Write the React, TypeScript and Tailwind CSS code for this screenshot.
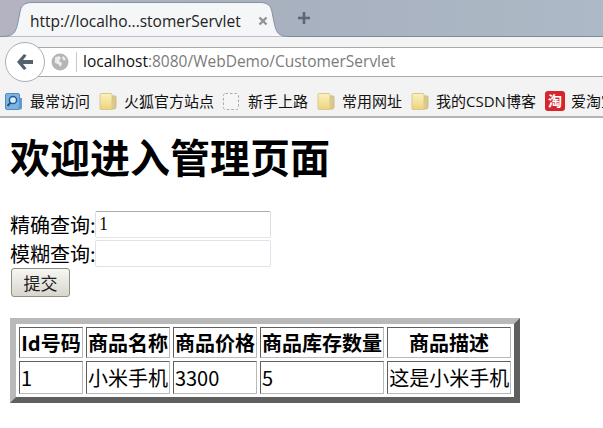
import React from 'react';

const ui = "font-['Open_Sans','Noto_Sans_CJK_SC',sans-serif]";

const Folder = () => (
  <svg width="18" height="19" viewBox="0 0 18 19" className="shrink-0">
    <defs>
      <linearGradient id="folderFill" x1="0" y1="0" x2="0" y2="1">
        <stop offset="0" stopColor="#fbf2bd" />
        <stop offset="1" stopColor="#ecd47c" />
      </linearGradient>
    </defs>
    <path d="M13 4h3q1 0 1 1v10q0 2-2 2h-3z" fill="#dcc98a" stroke="#c9bb8c" />
    <path d="M1 2.5q0-1 1-1h10q1 0 1 1v14q0 1-1 1H2q-1 0-1-1z" fill="url(#folderFill)" stroke="#d8c98f" />
  </svg>
);

const SearchBookmark = () => (
  <svg width="18" height="19" viewBox="0 0 18 19" className="shrink-0">
    <rect x="0.5" y="1.5" width="14" height="16" rx="1.5" fill="#7fb2e0" stroke="#4f8cc4" />
    <path d="M15 6h2v10q0 1.5-1.5 1.5H13z" fill="#5d9bd3" />
    <circle cx="8" cy="8" r="3.6" fill="#dcecf9" stroke="#1f5d96" strokeWidth="1.5" />
    <path d="M5.4 10.8 2.5 14" stroke="#1f4f80" strokeWidth="2" />
  </svg>
);

const DashedPage = () => (
  <svg width="18" height="19" viewBox="0 0 18 19" className="shrink-0">
    <rect x="0.5" y="1.5" width="15" height="16" rx="2" fill="#f6f6f6" stroke="#a8a8a8" strokeDasharray="2.5 2" />
  </svg>
);

const BookmarkItem = ({ icon, label }: { icon: React.ReactNode; label: string }) => (
  <div className="flex items-center gap-[7px] shrink-0">
    {icon}
    <span className="text-[15px] leading-none text-[#111]">{label}</span>
  </div>
);

const headers = ['Id号码', '商品名称', '商品价格', '商品库存数量', '商品描述'];
const row = ['1', '小米手机', '3300', '5', '这是小米手机'];
const widths = ['w-[63.5px]', 'w-[83.5px]', 'w-[83.5px]', 'w-[123.5px]', 'w-[123px]'];

export default function App() {
  return (
    <div className="w-[603px] h-[428px] overflow-hidden bg-white">
      {/* tab strip */}
      <div className={`${ui} h-[37px] flex items-end bg-gradient-to-r from-[#b3b3c2] via-[#a8b1bf] to-[#adb9c6] border-b border-[#7e8b99]`}>
        <div className="relative w-[287px] h-[35px] ml-[2px] -mb-px shrink-0">
          <svg width="287" height="35" viewBox="0 0 287 35" className="absolute inset-0">
            <path
              d="M0 34.5C12 34.5 14 30 16 20L18 10C19 4 22 .5 30 .5H258C266 .5 269 4 270 10L272 20C274 30 276 34.5 287 34.5"
              fill="#f5f6f7"
              stroke="#8593a1"
            />
          </svg>
          <span className="absolute left-[28px] top-[9px] text-[15.5px] leading-[20px] text-[#222] whitespace-nowrap">
            http://localho...stomerServlet
          </span>
          <svg width="10" height="10" viewBox="0 0 10 10" className="absolute left-[256px] top-[14px]">
            <path d="M1.5 1.5 8.5 8.5M8.5 1.5 1.5 8.5" stroke="#8d949c" strokeWidth="2.4" />
          </svg>
        </div>
        <svg width="14" height="14" viewBox="0 0 14 14" className="ml-[8px] mb-[11px]">
          <path d="M7 1v12M1 7h12" stroke="#5c6670" strokeWidth="2.6" />
        </svg>
      </div>

      {/* nav bar */}
      <div className={`${ui} relative h-[40px] bg-[#f3f3f3] pt-[10px]`}>
        <div className="h-[30px] ml-[30px] bg-white border-y border-[#a9a9a9] flex items-center">
          <svg width="18" height="18" viewBox="0 0 18 18" className="ml-[21px]">
            <circle cx="9" cy="9" r="8.5" fill="#b5b5b5" />
            <path d="M4 4.5 8 3l2 2-2 3 3 2-1 4-3-3-3-1zM12 3l3 3-2 2-2-3z" fill="#ececec" />
          </svg>
          <div className="w-px h-[20px] bg-[#c9c9c9] ml-[7px]" />
          <span className="ml-[6px] text-[15.5px] leading-none text-[#7b7b7b] whitespace-nowrap">
            <span className="text-[#111]">localhost</span>:8080/WebDemo/CustomerServlet
          </span>
        </div>
        <div className="absolute left-[5px] top-[5px] w-[40px] h-[40px] rounded-full bg-white border border-[#a8afb8] flex items-center justify-center">
          <svg width="20" height="18" viewBox="0 0 20 18">
            <path d="M9 1 2 9l7 8 2.6-1.6L8 11h10V7H8l3.6-4.4z" fill="#56616e" />
          </svg>
        </div>
      </div>

      {/* bookmarks */}
      <div className={`${ui} h-[41px] pt-[9px] bg-[#f3f3f3] border-b-2 border-[#b4b4b4] flex items-center pl-[5px] gap-[9px] overflow-hidden`}>
        <BookmarkItem icon={<SearchBookmark />} label="最常访问" />
        <BookmarkItem icon={<Folder />} label="火狐官方站点" />
        <BookmarkItem icon={<DashedPage />} label="新手上路" />
        <BookmarkItem icon={<Folder />} label="常用网址" />
        <BookmarkItem icon={<Folder />} label="我的CSDN博客" />
        <div className="flex items-center gap-[6px] shrink-0">
          <div className="w-[20px] h-[20px] rounded-[3px] bg-[#d8252c] text-white text-[14px] leading-[20px] text-center font-bold">淘</div>
          <span className="text-[15px] leading-none text-[#111]">爱淘宝</span>
        </div>
      </div>

      {/* page */}
      <div className="px-[10px] text-black text-[20px] font-['Noto_Sans_CJK_SC',sans-serif]">
        <h1 className="text-[40px] leading-[46px] font-bold mt-[15px] mb-[31px] tracking-normal">欢迎进入管理页面</h1>
        <div className="flex items-center h-[29px]">
          <span className="leading-none w-[85px] shrink-0 whitespace-nowrap">精确查询:</span>
          <input
            readOnly
            value="1"
            className="w-[176px] h-[27px] border border-t-[#ababab] border-x-[#dcdfe6] border-b-[#e3e6ee] rounded-[2px] px-[3px] text-[18px] text-[#111] font-['Liberation_Serif',serif] outline-none"
          />
        </div>
        <div className="flex items-center h-[29px]">
          <span className="leading-none w-[85px] shrink-0 whitespace-nowrap">模糊查询:</span>
          <input
            readOnly
            className="w-[176px] h-[27px] border border-[#dfe3ec] rounded-[2px] px-[3px] text-[16px] outline-none"
          />
        </div>
        <button className="block w-[59px] h-[29px] ml-px rounded-[3px] border border-[#8e8f7f] bg-gradient-to-b from-[#f6f6f3] to-[#d8d6cd] text-[17px] leading-none text-[#222]">
          提交
        </button>

        <table className="mt-[21px] w-[510px] h-[85px] border-separate border-spacing-[3.5px] border-[6px] border-t-[#b9b9b9] border-l-[#b9b9b9] border-b-[#5f5f5f] border-r-[#5f5f5f] table-fixed">
          <thead>
            <tr>
              {headers.map((h, i) => (
                <th
                  key={h}
                  className={`${widths[i]} h-[31px] p-0 text-center font-bold leading-none whitespace-nowrap border border-t-[#5f5f5f] border-l-[#5f5f5f] border-b-[#b9b9b9] border-r-[#b9b9b9]`}
                >
                  {h}
                </th>
              ))}
            </tr>
          </thead>
          <tbody>
            <tr>
              {row.map((c, i) => (
                <td
                  key={i}
                  className={`${widths[i]} h-[31px] p-0 pl-px text-left leading-none whitespace-nowrap border border-t-[#5f5f5f] border-l-[#5f5f5f] border-b-[#b9b9b9] border-r-[#b9b9b9]`}
                >
                  {c}
                </td>
              ))}
            </tr>
          </tbody>
        </table>
      </div>
    </div>
  );
}
